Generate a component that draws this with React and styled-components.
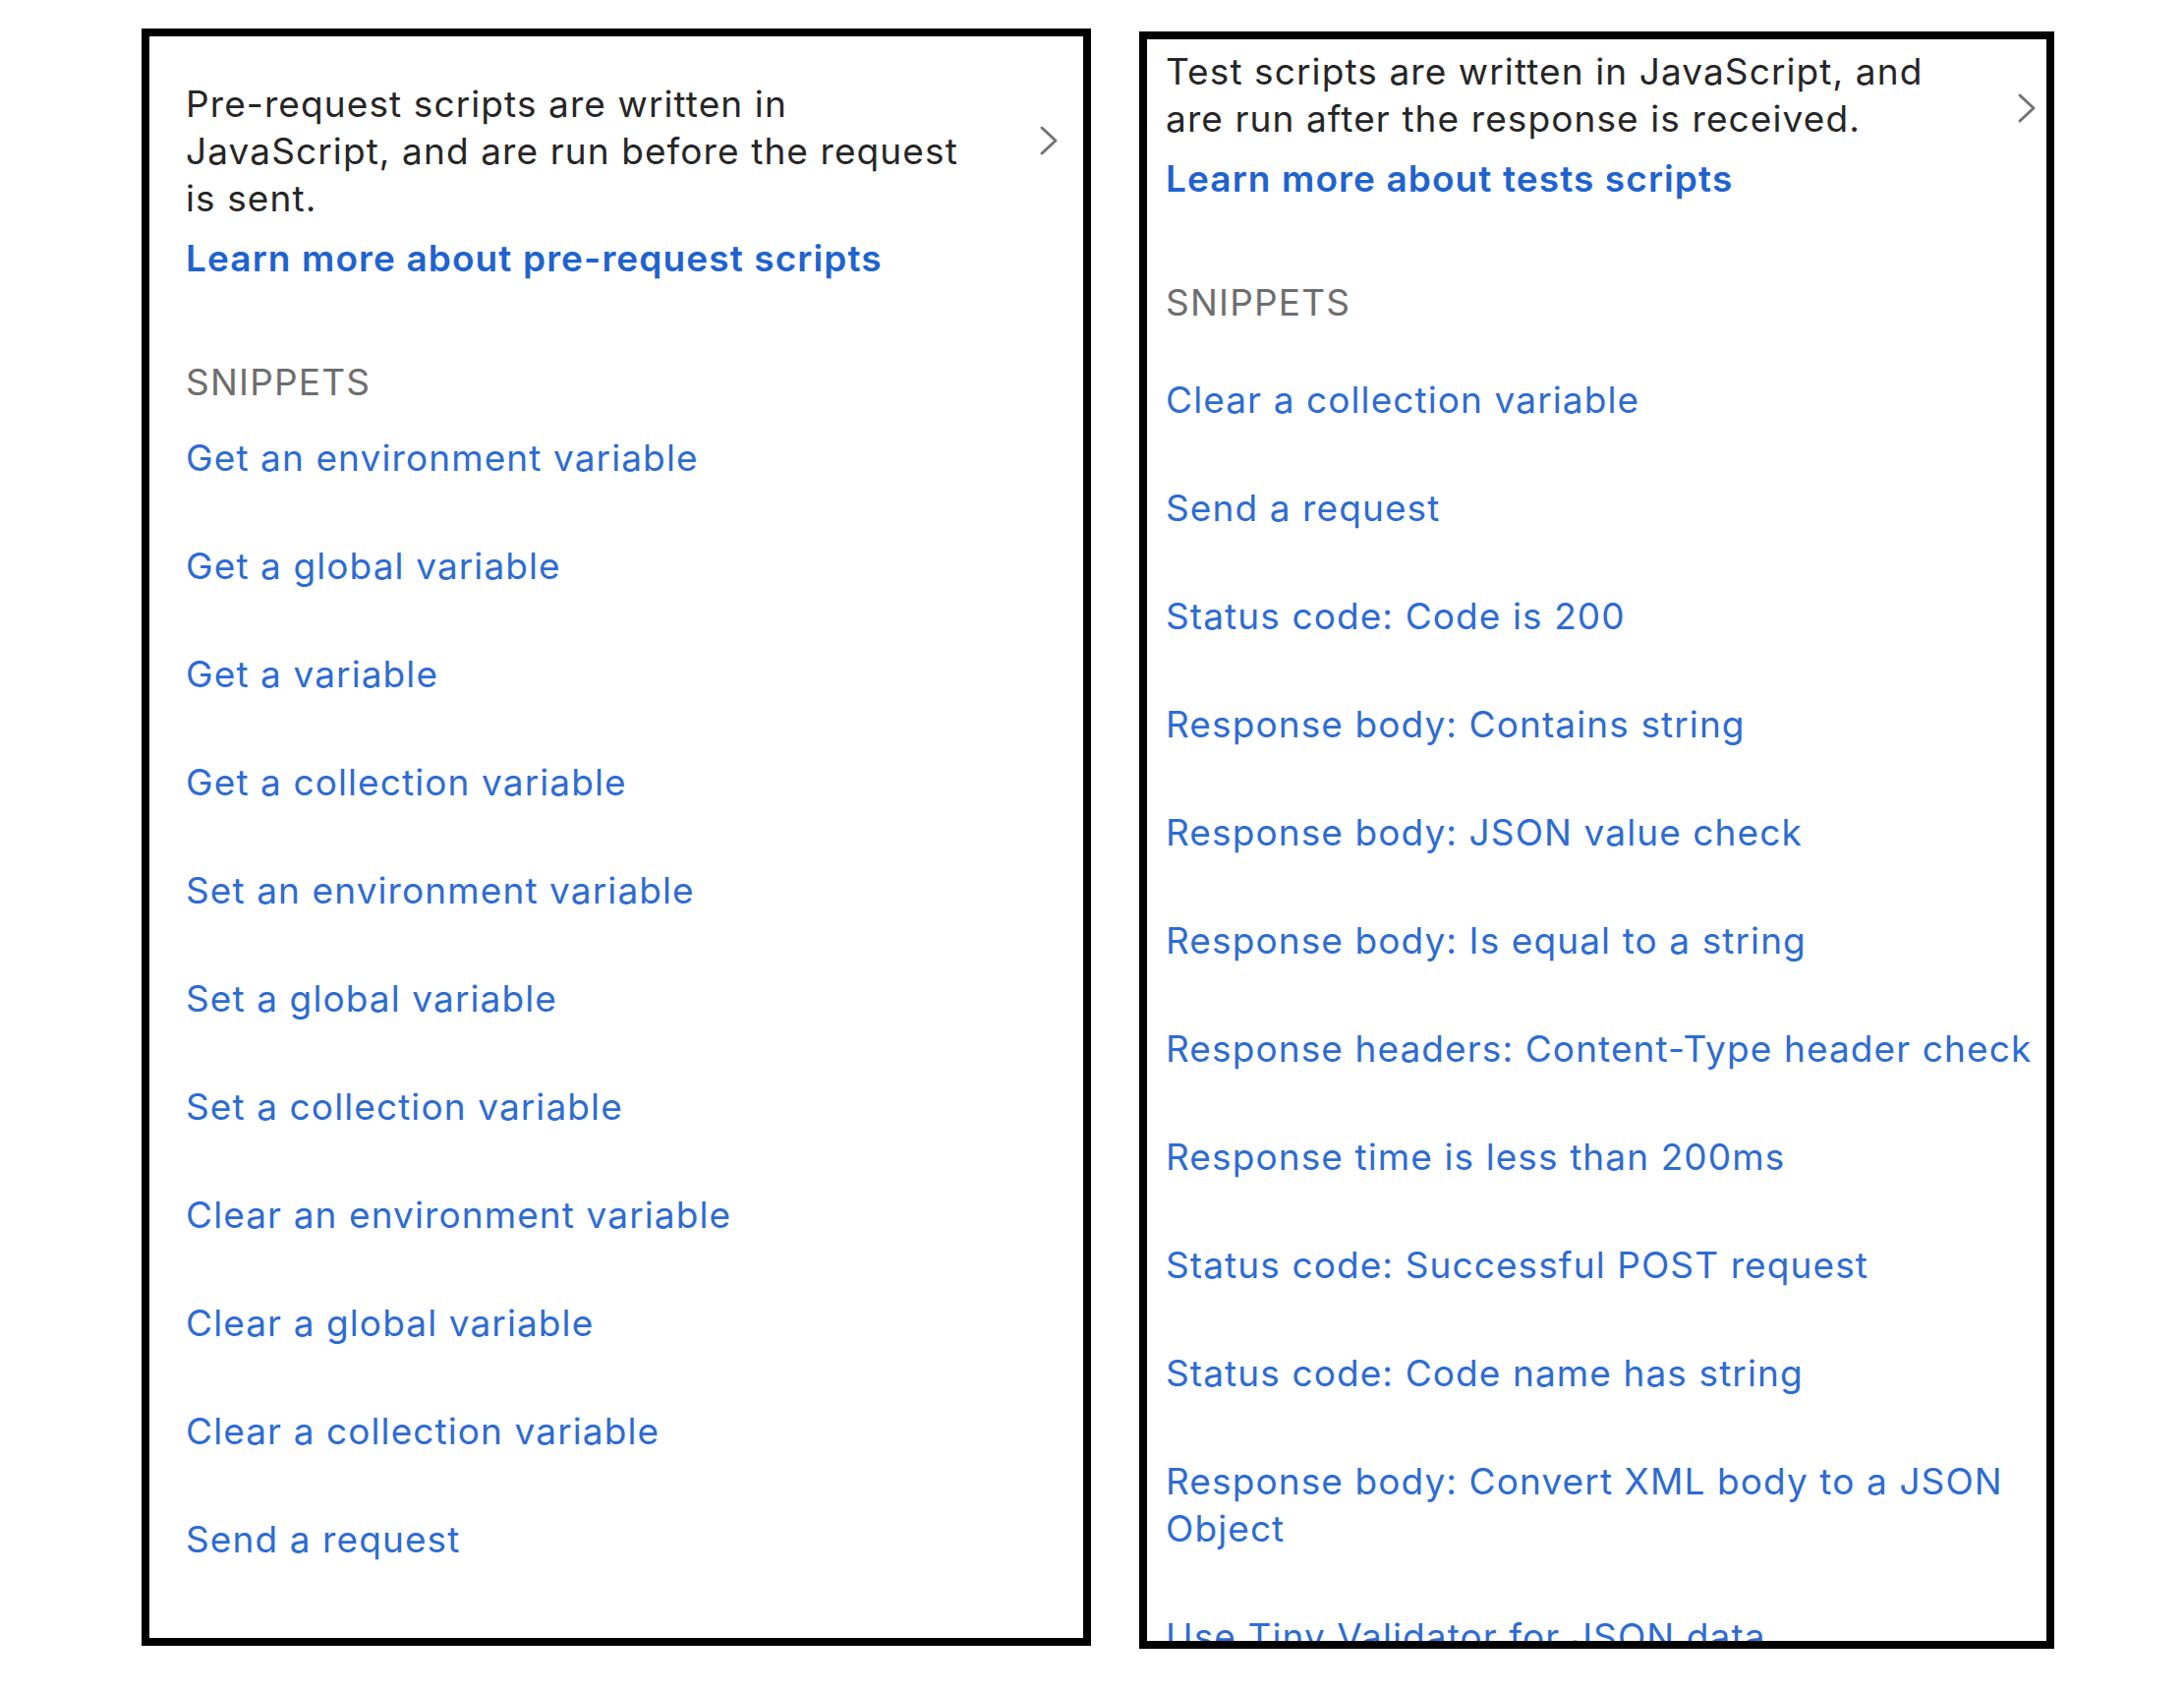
import React from 'react'
import styled, { createGlobalStyle } from 'styled-components'

const GlobalStyle = createGlobalStyle`
    html, body {
        margin: 0;
        padding: 0;
        background: #fff;
    }
    body {
        font-family: Inter, "Noto Sans", "Liberation Sans", sans-serif;
    }
`

const Page = styled.div`
    display: flex;
    align-items: flex-start;
    gap: 49px;
    padding: 29px 0 0 144px;
`

const Panel = styled.section`
    box-sizing: border-box;
    width: ${p => p.$width}px;
    height: 1645px;
    margin-top: ${p => p.$offset || 0}px;
    border: 8px solid #000;
    background: #fff;
    overflow: hidden;
    padding: ${p => p.$pad};
    font-size: 37px;
    line-height: 48px;
    letter-spacing: 1.1px;
`

const Header = styled.div`
    display: flex;
    justify-content: space-between;
    align-items: flex-start;
`

const Description = styled.p`
    margin: 0;
    max-width: 790px;
    color: #262626;
    font-weight: 400;
`

const Chevron = styled.svg`
    flex: none;
    width: 20px;
    height: 32px;
    margin-top: 45px;
`

const LearnMore = styled.a`
    display: block;
    margin-top: 13px;
    color: #1f63cf;
    font-weight: 600;
    letter-spacing: 1.1px;
    text-decoration: none;
`

const SectionTitle = styled.div`
    margin-top: 78px;
    color: #6e6e6e;
    text-transform: uppercase;
    letter-spacing: 1.2px;
`

const SnippetList = styled.ul`
    list-style: none;
    margin: ${p => p.$top}px 0 0;
    padding: 0;
    display: flex;
    flex-direction: column;
    gap: 62px;
`

const Snippet = styled.li`
    color: #2e6cd2;
    cursor: pointer;
`

const ChevronIcon = () => (
    <Chevron viewBox="0 0 20 32" fill="none">
        <path d="M3 3 L17 16 L3 29" stroke="#737373" strokeWidth="3" strokeLinecap="round" strokeLinejoin="round" />
    </Chevron>
)

const preRequest = [
    'Get an environment variable',
    'Get a global variable',
    'Get a variable',
    'Get a collection variable',
    'Set an environment variable',
    'Set a global variable',
    'Set a collection variable',
    'Clear an environment variable',
    'Clear a global variable',
    'Clear a collection variable',
    'Send a request',
]

const tests = [
    'Clear a collection variable',
    'Send a request',
    'Status code: Code is 200',
    'Response body: Contains string',
    'Response body: JSON value check',
    'Response body: Is equal to a string',
    'Response headers: Content-Type header check',
    'Response time is less than 200ms',
    'Status code: Successful POST request',
    'Status code: Code name has string',
    'Response body: Convert XML body to a JSON Object',
    'Use Tiny Validator for JSON data',
]

const App = () => <>
    <GlobalStyle />
    <Page>
        <Panel $width={966} $pad="45px 25px 0 37px">
            <Header>
                <Description>
                    Pre-request scripts are written in JavaScript, and are run before the request is sent.
                </Description>
                <ChevronIcon />
            </Header>
            <LearnMore href="#">Learn more about pre-request scripts</LearnMore>
            <SectionTitle>Snippets</SectionTitle>
            <SnippetList $top={29}>
                {preRequest.map(s => <Snippet key={s}>{s}</Snippet>)}
            </SnippetList>
        </Panel>
        <Panel $width={931} $offset={3} $pad="9px 10px 0 19px">
            <Header>
                <Description>
                    Test scripts are written in JavaScript, and are run after the response is received.
                </Description>
                <ChevronIcon />
            </Header>
            <LearnMore href="#">Learn more about tests scripts</LearnMore>
            <SectionTitle>Snippets</SectionTitle>
            <SnippetList $top={51}>
                {tests.map(s => <Snippet key={s}>{s}</Snippet>)}
            </SnippetList>
        </Panel>
    </Page>
</>

export default App
